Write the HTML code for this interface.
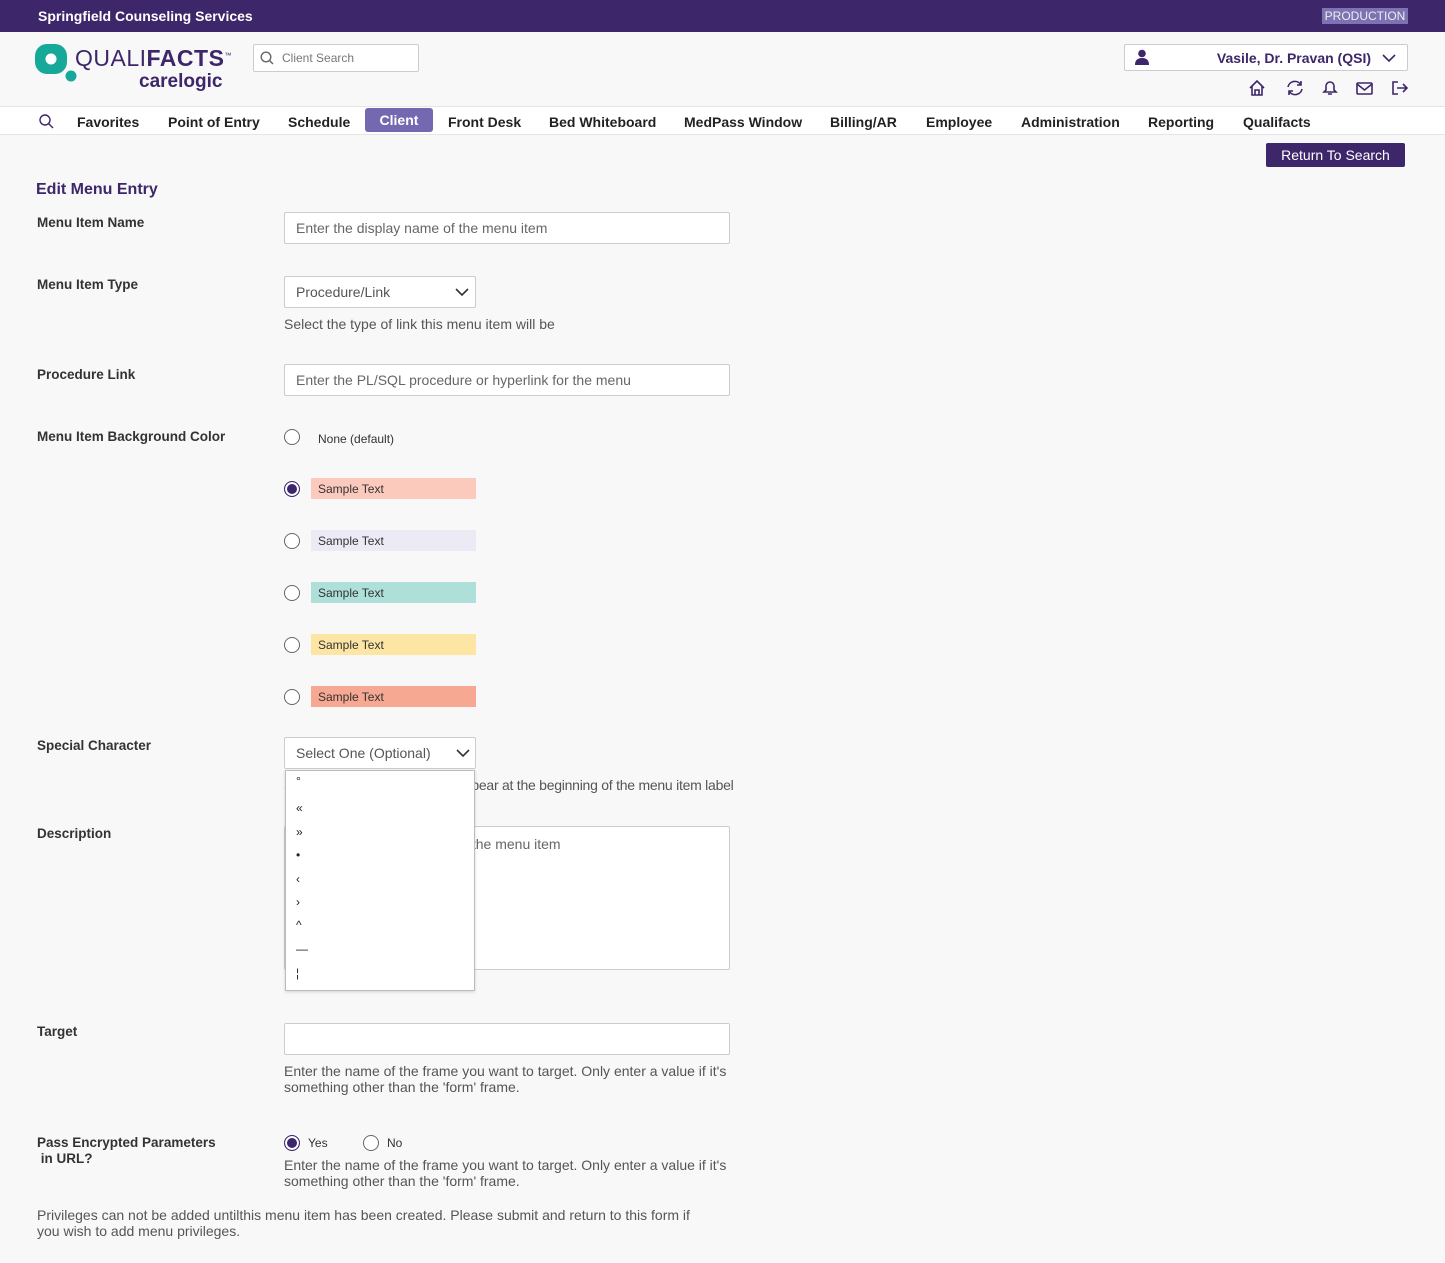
<!DOCTYPE html>
<html><head><meta charset="utf-8"><style>
*{box-sizing:border-box;margin:0;padding:0}
body{width:1445px;height:1263px;background:#f8f8f8;font-family:"Liberation Sans",Arial,sans-serif;color:#333;position:relative;overflow:hidden}
.a{position:absolute}
.top{left:0;top:0;width:1445px;height:32px;background:#3d266a;color:#fff}
.lbl{font-size:13.5px;font-weight:bold;color:#333;left:37px}
.inp{background:#fff;border:1px solid #ccc;border-radius:2px;font-size:14px;color:#666;padding-left:11px;display:flex;align-items:center}
.help{font-size:14px;color:#555;left:284px;line-height:16px}
.nav{left:0;top:106px;width:1445px;height:29px;background:#fff;border-top:1px solid #e5e5e5;border-bottom:1px solid #e5e5e5}
.nav span{position:absolute;top:7px;font-size:14px;font-weight:bold;color:#222}
.radio{width:16px;height:16px;border:1.5px solid #666;border-radius:50%;background:#fff;left:284px}
.radio.on{border:1.5px solid #3d266a;box-shadow:inset 0 0 0 2px #fff;background:#3d266a}
.sw{left:311px;width:165px;height:21px;font-size:12px;color:#333;padding:4px 7px}
.opt{left:296px;font-size:12px;color:#222}
</style></head><body>
<div class="a top">
<div class="a" style="left:38px;top:8px;font-size:14px;font-weight:bold">Springfield Counseling Services</div>
<div class="a" style="left:1322px;top:8px;width:86px;height:16px;background:#7b73b3;color:#eee;font-size:12px;text-align:center;line-height:16px">PRODUCTION</div>
</div>
<svg class="a" style="left:34px;top:43px" width="45" height="40"><rect x="1" y="1" width="32" height="30" rx="12" fill="#16a99a"/><circle cx="17" cy="16" r="5.5" fill="#fff"/><circle cx="37" cy="33" r="5.5" fill="#16a99a"/></svg>
<div class="a" style="left:75px;top:45px;font-size:23px;color:#3d266a;letter-spacing:0.5px"><span style="font-weight:300">QUALI</span><b>FACTS</b><sup style="font-size:7px">™</sup></div>
<div class="a" style="left:139px;top:71px;font-size:19px;color:#3d266a;font-weight:bold">carelogic</div>
<div class="a inp" style="left:253px;top:44px;width:166px;height:28px;font-size:12px;color:#777;padding-left:28px">Client Search</div>
<svg class="a" style="left:260px;top:51px" width="14" height="14"><circle cx="6" cy="6" r="4.8" fill="none" stroke="#666" stroke-width="1.4"/><line x1="9.5" y1="9.5" x2="13" y2="13" stroke="#666" stroke-width="1.4"/></svg>
<div class="a inp" style="left:1124px;top:44px;width:284px;height:27px;justify-content:flex-end;padding-right:36px;color:#3d266a;font-weight:bold;font-size:14px">Vasile, Dr. Pravan (QSI)</div>
<svg class="a" style="left:1134px;top:49px" width="16" height="16"><circle cx="8" cy="4.5" r="3.8" fill="#3d266a"/><path d="M1 16 Q1 9 8 9 Q15 9 15 16Z" fill="#3d266a"/></svg>
<svg class="a" style="left:1382px;top:53px" width="14" height="10"><path d="M1 2 L7 8 L13 2" fill="none" stroke="#3d266a" stroke-width="1.6"/></svg>
<svg class="a" style="left:1248px;top:79px" width="170" height="18" fill="none" stroke="#3d266a" stroke-width="1.6">
<path d="M2 9 L9 2 L16 9 M4 7 V16 H14 V7 M7 16 V11 H11 V16"/>
<path d="M40 8 A7 7 0 0 1 53 6 M53 2 V6 H49 M54 10 A7 7 0 0 1 41 12 M41 16 V12 H45"/>
<path d="M76 13 H88 L86 11 V7 A4 4 0 0 0 78 7 V11 Z M80 15 H84"/>
<rect x="109" y="4" width="15" height="11" rx="1"/><path d="M109 5 L116.5 11 L124 5"/>
<path d="M150 3 H145 V15 H150 M149 9 H159 M155 5 L159 9 L155 13"/>
</svg>
<div class="a nav">
<svg class="a" style="left:39px;top:7px" width="15" height="15"><circle cx="6" cy="6" r="5" fill="none" stroke="#3d266a" stroke-width="1.4"/><line x1="9.7" y1="9.7" x2="14" y2="14" stroke="#3d266a" stroke-width="1.4"/></svg>
<span style="left:77px">Favorites</span><span style="left:168px">Point of Entry</span><span style="left:288px">Schedule</span>
<div class="a" style="left:365px;top:1px;width:68px;height:24px;background:#7468b0;border-radius:3px;color:#fff;font-weight:bold;font-size:14px;text-align:center;line-height:24px">Client</div>
<span style="left:448px">Front Desk</span><span style="left:549px">Bed Whiteboard</span><span style="left:684px">MedPass Window</span><span style="left:830px">Billing/AR</span><span style="left:926px">Employee</span><span style="left:1021px">Administration</span><span style="left:1148px">Reporting</span><span style="left:1243px">Qualifacts</span>
</div>
<div class="a" style="left:1266px;top:143px;width:139px;height:24px;background:#3d266a;color:#fff;font-size:14px;text-align:center;line-height:24px;border-radius:2px">Return To Search</div>
<div class="a" style="left:36px;top:181px;font-size:16px;font-weight:bold;color:#3d266a">Edit Menu Entry</div>
<div class="a lbl" style="top:215px">Menu Item Name</div>
<div class="a inp" style="left:284px;top:212px;width:446px;height:32px">Enter the display name of the menu item</div>
<div class="a lbl" style="top:277px">Menu Item Type</div>
<div class="a inp" style="left:284px;top:276px;width:192px;height:32px;color:#555">Procedure/Link</div>
<svg class="a" style="left:455px;top:287px" width="14" height="10"><path d="M1 2 L7 8 L13 2" fill="none" stroke="#333" stroke-width="1.6"/></svg>
<div class="a help" style="top:316px">Select the type of link this menu item will be</div>
<div class="a lbl" style="top:367px">Procedure Link</div>
<div class="a inp" style="left:284px;top:364px;width:446px;height:32px">Enter the PL/SQL procedure or hyperlink for the menu</div>
<div class="a lbl" style="top:429px">Menu Item Background Color</div>
<div class="a radio" style="top:429px"></div><div class="a" style="left:318px;top:432px;font-size:12px;color:#333">None (default)</div>
<div class="a radio on" style="top:481px"></div><div class="a sw" style="top:478px;background:#fbcabd">Sample Text</div>
<div class="a radio" style="top:533px"></div><div class="a sw" style="top:530px;background:#ebeaf5">Sample Text</div>
<div class="a radio" style="top:585px"></div><div class="a sw" style="top:582px;background:#aee0d9">Sample Text</div>
<div class="a radio" style="top:637px"></div><div class="a sw" style="top:634px;background:#fde5a4">Sample Text</div>
<div class="a radio" style="top:689px"></div><div class="a sw" style="top:686px;background:#f6a892">Sample Text</div>
<div class="a lbl" style="top:738px">Special Character</div>
<div class="a help" style="top:777px;letter-spacing:-0.25px">Select a special character to appear at the beginning of the menu item label</div>
<div class="a lbl" style="top:826px">Description</div>
<div class="a inp" style="left:284px;top:826px;width:446px;height:144px;align-items:flex-start;padding-top:9px">Enter a short description for the menu item</div>
<div class="a inp" style="left:284px;top:737px;width:192px;height:32px;color:#555">Select One (Optional)</div>
<svg class="a" style="left:456px;top:748px" width="14" height="10"><path d="M1 2 L7 8 L13 2" fill="none" stroke="#333" stroke-width="1.6"/></svg>
<div class="a" style="left:285px;top:770px;width:190px;height:221px;background:#fff;border:1px solid #bbb;box-shadow:0 1px 3px rgba(0,0,0,.15)"></div>
<div class="a opt" style="top:774px">°</div><div class="a opt" style="top:801px">«</div><div class="a opt" style="top:825px">»</div><div class="a opt" style="top:848px">•</div><div class="a opt" style="top:872px">‹</div><div class="a opt" style="top:895px">›</div><div class="a opt" style="top:918px">^</div><div class="a opt" style="top:942px">—</div><div class="a opt" style="top:966px">¦</div>
<div class="a lbl" style="top:1024px">Target</div>
<div class="a inp" style="left:284px;top:1023px;width:446px;height:32px"></div>
<div class="a help" style="top:1063px">Enter the name of the frame you want to target. Only enter a value if it's<br>something other than the 'form' frame.</div>
<div class="a lbl" style="top:1135px;line-height:16px">Pass Encrypted Parameters<br>&nbsp;in URL?</div>
<div class="a radio on" style="top:1135px"></div><div class="a" style="left:308px;top:1136px;font-size:12px">Yes</div>
<div class="a radio" style="left:363px;top:1135px"></div><div class="a" style="left:387px;top:1136px;font-size:12px">No</div>
<div class="a help" style="top:1157px">Enter the name of the frame you want to target. Only enter a value if it's<br>something other than the 'form' frame.</div>
<div class="a help" style="left:37px;top:1207px">Privileges can not be added untilthis menu item has been created. Please submit and return to this form if<br>you wish to add menu privileges.</div>
</body></html>
